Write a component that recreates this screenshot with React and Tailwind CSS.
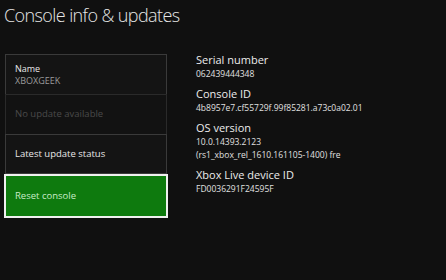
import React from 'react';

const info = [
  { label: 'Serial number', values: ['062439444348'] },
  { label: 'Console ID', values: ['4b8957e7.cf55729f.99f85281.a73c0a02.01'] },
  { label: 'OS version', values: ['10.0.14393.2123', '(rs1_xbox_rel_1610.161105-1400) fre'] },
  { label: 'Xbox Live device ID', values: ['FD0036291F24595F'] },
];

const App = () => {
  return (
    <div className="w-[446px] h-[280px] bg-[#101010] overflow-hidden font-['Open_Sans',sans-serif] text-[#e8e8e8]">
      <h1 className="pl-[4px] pt-[3px] h-[54px] text-[18px] leading-[25px] font-light tracking-[-0.6px] text-[#e6e6e6]">
        Console info &amp; updates
      </h1>

      <div className="flex">
        {/* Left menu */}
        <div className="ml-[5px] w-[162px] flex flex-col">
          <div className="h-[41px] border border-[#3a3a3a] bg-[#141414] flex flex-col justify-center pl-[9px]">
            <span className="text-[9px] leading-[12px] text-[#e8e8e8]">Name</span>
            <span className="text-[9px] leading-[12px] text-[#9a9a9a]">XBOXGEEK</span>
          </div>
          <div className="h-[41px] -mt-px border border-[#2a2a2a] bg-[#121212] flex items-center pl-[9px]">
            <span className="text-[9.5px] text-[#4a4a4a]">No update available</span>
          </div>
          <div className="h-[40px] -mt-px border border-[#3a3a3a] bg-[#141414] flex items-center pl-[9px]">
            <span className="text-[9.5px] text-[#e8e8e8]">Latest update status</span>
          </div>
          <div className="h-[44px] -mx-[1px] border-2 border-[#f0f0f0] bg-[#0e7a0e] flex items-center pl-[9px]">
            <span className="text-[9.5px] text-[#c8ecc8]">Reset console</span>
          </div>
        </div>

        {/* Right info */}
        <div className="ml-[29px] -mt-[1px] flex flex-col gap-[7px]">
          {info.map((item) => (
            <div key={item.label} className="flex flex-col">
              <span className="text-[11px] leading-[14px] text-[#ececec]">{item.label}</span>
              {item.values.map((v) => (
                <span key={v} className="text-[8.5px] leading-[13px] text-[#e0e0e0]">{v}</span>
              ))}
            </div>
          ))}
        </div>
      </div>
    </div>
  );
};

export default App;
